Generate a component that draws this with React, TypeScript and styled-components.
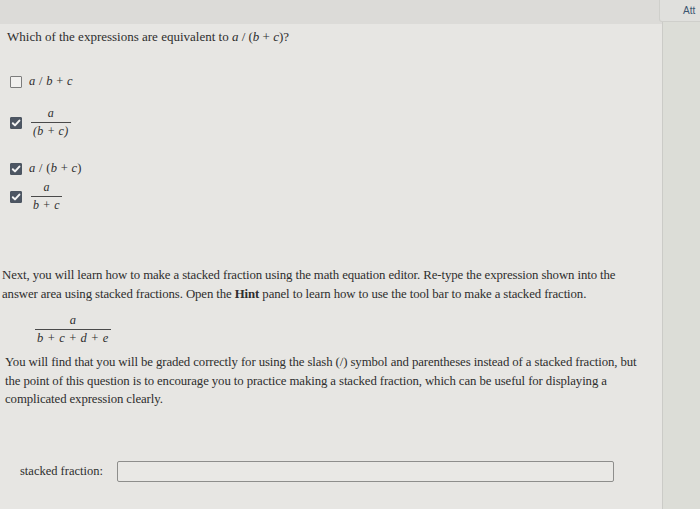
import styled, { createGlobalStyle } from "styled-components";

const Global = createGlobalStyle`
  html, body {
    margin: 0;
    padding: 0;
    background: #e5e4e1;
  }
  body {
    font-family: "Liberation Serif", "Times New Roman", serif;
    color: #2e2e2e;
  }
`;

function Check({ checked }: { checked?: boolean }) {
  return (
    <Box $checked={checked}>
      {checked && (
        <svg width="10" height="10" viewBox="0 0 10 10">
          <path d="M1.8 5.2 L4 7.4 L8.4 2.6" stroke="#f4f4f4" strokeWidth="2" fill="none" strokeLinecap="round" strokeLinejoin="round" />
        </svg>
      )}
    </Box>
  );
}

function Frac({ num, den }: { num: string; den: string }) {
  return (
    <Fraction>
      <Num>{num}</Num>
      <Den>{den}</Den>
    </Fraction>
  );
}

export default function App() {
  return (
    <>
      <Global />
      <Page>
        <Main>
          <TopBand />
          <Question>
            Which of the expressions are equivalent to <M>a</M> / (<M>b</M> + <M>c</M>)?
          </Question>
          <Options>
            <Option $gap={18}>
              <Check />
              <Expr><M>a</M> / <M>b</M> + <M>c</M></Expr>
            </Option>
            <Option $gap={23}>
              <Check checked />
              <Frac num="a" den="(b + c)" />
            </Option>
            <Option $gap={5}>
              <Check checked />
              <Expr><M>a</M> / (<M>b</M> + <M>c</M>)</Expr>
            </Option>
            <Option $gap={0}>
              <Check checked />
              <Frac num="a" den="b + c" />
            </Option>
          </Options>
          <Para $top={54}>
            Next, you will learn how to make a stacked fraction using the math equation editor. Re-type the expression shown into the
            answer area using stacked fractions. Open the <Strong>Hint</Strong> panel to learn how to use the tool bar to make a stacked fraction.
          </Para>
          <Display>
            <Frac num="a" den="b + c + d + e" />
          </Display>
          <Para $top={8} $left={5}>
            You will find that you will be graded correctly for using the slash (/) symbol and parentheses instead of a stacked fraction, but
            the point of this question is to encourage you to practice making a stacked fraction, which can be useful for displaying a
            complicated expression clearly.
          </Para>
          <AnswerRow>
            <Label>stacked fraction:</Label>
            <Input />
          </AnswerRow>
        </Main>
        <Side>
          <Tab>Att</Tab>
        </Side>
      </Page>
    </>
  );
}

const Page = styled.div`
  display: flex;
  width: 700px;
  height: 509px;
  overflow: hidden;
`;

const Main = styled.div`
  width: 662px;
  flex-shrink: 0;
  display: flex;
  flex-direction: column;
  background: #e7e6e3;
`;

const TopBand = styled.div`
  height: 24px;
  background: #dcdbd8;
`;

const Side = styled.div`
  flex: 1;
  background: #dcddd7;
  border-left: 1px solid #cbcbc7;
  position: relative;
`;

const Tab = styled.div`
  position: absolute;
  top: 0;
  left: -4px;
  width: 42px;
  height: 22px;
  box-sizing: border-box;
  background: #e0e0dd;
  border: 1px solid #cfcfcb;
  border-top: none;
  border-radius: 0 0 0 3px;
  font-family: "Liberation Sans", Arial, sans-serif;
  font-size: 10px;
  color: #3c5670;
  padding: 5px 0 0 23px;
  white-space: nowrap;
  overflow: hidden;
`;

const Question = styled.div`
  margin: 5px 0 0 7px;
  font-size: 13px;
  line-height: 16px;
`;

const M = styled.i`
  font-style: italic;
`;

const Options = styled.div`
  display: flex;
  flex-direction: column;
  margin: 29px 0 0 10px;
`;

const Option = styled.div<{ $gap: number }>`
  display: flex;
  align-items: center;
  gap: 7px;
  margin-bottom: ${(p) => p.$gap}px;
  font-size: 12.5px;
`;

const Box = styled.div<{ $checked?: boolean }>`
  width: 12px;
  height: 12px;
  box-sizing: border-box;
  display: flex;
  align-items: center;
  justify-content: center;
  border: 1px solid ${(p) => (p.$checked ? "#4c5561" : "#7c7c7c")};
  background: ${(p) => (p.$checked ? "#4d5663" : "#f1f0ee")};
  border-radius: 1px;
`;

const Expr = styled.span`
  font-size: 12.5px;
  letter-spacing: 0.3px;
`;

const Fraction = styled.span`
  display: inline-flex;
  flex-direction: column;
  align-items: center;
  font-style: italic;
  font-size: 12px;
  line-height: 13px;
  margin-left: 2px;
`;

const Num = styled.span`
  padding: 0 2px 2px;
`;

const Den = styled.span`
  border-top: 1px solid #4a4a4a;
  padding: 2px 2px 0;
  letter-spacing: 0.3px;
`;

const Para = styled.p<{ $top: number; $left?: number }>`
  margin: ${(p) => p.$top}px 20px 0 ${(p) => p.$left ?? 2}px;
  font-size: 12.8px;
  line-height: 18.5px;
  letter-spacing: -0.1px;
`;

const Strong = styled.b`
  font-weight: 700;
`;

const Display = styled.div`
  margin: 7px 0 0 35px;
  & > span {
    margin-left: 0;
    font-size: 12.5px;
  }
`;

const AnswerRow = styled.div`
  display: flex;
  align-items: center;
  gap: 14px;
  margin: 52px 0 0 20px;
`;

const Label = styled.span`
  font-size: 12.5px;
`;

const Input = styled.div`
  width: 497px;
  height: 21px;
  box-sizing: border-box;
  border: 1.5px solid #8e8e8c;
  border-radius: 2px;
  background: #e9e8e5;
`;
